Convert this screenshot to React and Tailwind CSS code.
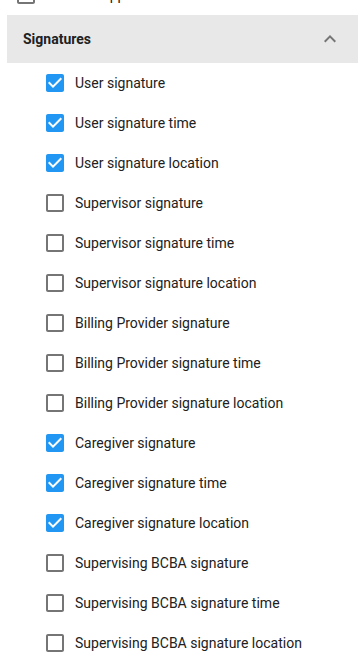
import React, { useState } from 'react';

const CHECKED =
  'M19 3H5c-1.11 0-2 .9-2 2v14c0 1.1.89 2 2 2h14c1.11 0 2-.9 2-2V5c0-1.1-.89-2-2-2zm-9 14l-5-5 1.41-1.41L10 14.17l7.59-7.59L19 8l-9 9z';
const BLANK =
  'M19 5v14H5V5h14m0-2H5c-1.1 0-2 .9-2 2v14c0 1.1.9 2 2 2h14c1.1 0 2-.9 2-2V5c0-1.1-.9-2-2-2z';

const initial = [
  ['User signature', true],
  ['User signature time', true],
  ['User signature location', true],
  ['Supervisor signature', false],
  ['Supervisor signature time', false],
  ['Supervisor signature location', false],
  ['Billing Provider signature', false],
  ['Billing Provider signature time', false],
  ['Billing Provider signature location', false],
  ['Caregiver signature', true],
  ['Caregiver signature time', true],
  ['Caregiver signature location', true],
  ['Supervising BCBA signature', false],
  ['Supervising BCBA signature time', false],
  ['Supervising BCBA signature location', false],
];

function Box({ checked }) {
  return (
    <svg
      viewBox="0 0 24 24"
      className={`h-6 w-6 shrink-0 ${checked ? 'text-[#2196f3]' : 'text-[#757575]'}`}
    >
      <path fill="currentColor" d={checked ? CHECKED : BLANK} />
    </svg>
  );
}

export default function App() {
  const [items, setItems] = useState(initial);
  const [open, setOpen] = useState(true);

  const toggle = (i) => {
    const updated = [...items];
    updated[i] = [updated[i][0], !updated[i][1]];
    setItems(updated);
  };

  return (
    <div
      className="h-[668px] overflow-hidden bg-white text-[14px] text-[#212121]"
      style={{ fontFamily: 'Roboto, "Liberation Sans", sans-serif' }}
    >
      {/* ligne précédente, coupée en haut */}
      <div className="-mt-[25px] flex h-10 items-center gap-2 pl-[14px]">
        <Box checked={false} />
        <span>Include supplemental</span>
      </div>

      <div className="mx-[7px] w-[351px]">
        <button
          type="button"
          onClick={() => setOpen(!open)}
          className="flex h-12 w-full items-center justify-between bg-[#e8e8e8] pl-4 pr-[16px]"
        >
          <span className="font-bold">Signatures</span>
          <svg viewBox="0 0 24 24" className="h-6 w-6 text-[#757575]">
            <path fill="currentColor" d="M12 8l-6 6 1.41 1.41L12 10.83l4.59 4.58L18 14z" />
          </svg>
        </button>

        {open &&
          items.map(([label, checked], i) => (
            <div
              key={label}
              onClick={() => toggle(i)}
              className="flex h-10 cursor-pointer items-center gap-2 pl-9"
            >
              <Box checked={checked} />
              <span>{label}</span>
            </div>
          ))}
      </div>
    </div>
  );
}
